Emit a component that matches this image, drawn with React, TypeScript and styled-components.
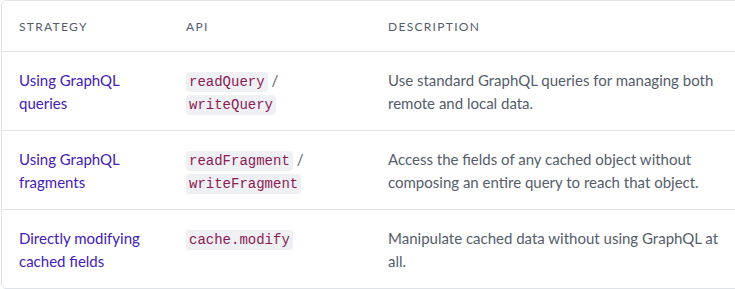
import styled, { createGlobalStyle } from "styled-components";

const GlobalStyle = createGlobalStyle`
    body {
        margin: 0;
        background: #ffffff;
        font-family: "Source Sans Pro", Lato, "Noto Sans", sans-serif;
    }
`;

const Page = styled.div`
    padding-left: 1px;
    overflow: hidden;
    width: 735px;
`;

const Table = styled.table`
    width: 740px;
    border-collapse: separate;
    border-spacing: 0;
    border: 1px solid #dfe2e7;
    border-radius: 5px;
    table-layout: fixed;
`;

const HeadCell = styled.th<{ $w?: number }>`
    box-sizing: border-box;
    width: ${(p) => (p.$w ? `${p.$w}px` : "auto")};
    text-align: left;
    padding: 16px 17px 15px;
    font-size: 12px;
    line-height: 19px;
    font-weight: 400;
    letter-spacing: 1.3px;
    text-transform: uppercase;
    color: #555d6b;
    border-bottom: 1px solid #dfe2e7;
`;

const Cell = styled.td<{ $last?: boolean }>`
    box-sizing: border-box;
    vertical-align: top;
    padding: 17px 17px 15px;
    font-size: 15px;
    line-height: 23px;
    color: #555d6b;
    border-bottom: ${(p) => (p.$last ? "none" : "1px solid #dfe2e7")};
`;

const Strategy = styled.a`
    color: #3f20ba;
    text-decoration: none;
`;

const Code = styled.code`
    font-family: "Liberation Mono", "DejaVu Sans Mono", monospace;
    font-size: 14px;
    line-height: 16px;
    color: #8d1a54;
    background: #eef0f3;
    border-radius: 4px;
    padding: 2px 3px;
`;

interface Row {
    strategy: string;
    apis: string[];
    description: string;
}

const rows: Row[] = [
    {
        strategy: "Using GraphQL queries",
        apis: ["readQuery", "writeQuery"],
        description: "Use standard GraphQL queries for managing both remote and local data.",
    },
    {
        strategy: "Using GraphQL fragments",
        apis: ["readFragment", "writeFragment"],
        description: "Access the fields of any cached object without composing an entire query to reach that object.",
    },
    {
        strategy: "Directly modifying cached fields",
        apis: ["cache.modify"],
        description: "Manipulate cached data without using GraphQL at all.",
    },
];

function App() {
    return (
        <Page>
            <GlobalStyle />
            <Table>
                <thead>
                    <tr>
                        <HeadCell $w={167}>Strategy</HeadCell>
                        <HeadCell $w={202}>API</HeadCell>
                        <HeadCell>Description</HeadCell>
                    </tr>
                </thead>
                <tbody>
                    {rows.map((row, i) => (
                        <tr key={row.strategy}>
                            <Cell $last={i === rows.length - 1}>
                                <Strategy href="#">{row.strategy}</Strategy>
                            </Cell>
                            <Cell $last={i === rows.length - 1}>
                                {row.apis.map((api, j) => (
                                    <span key={api}>
                                        <Code>{api}</Code>
                                        {j < row.apis.length - 1 ? " / " : null}
                                    </span>
                                ))}
                            </Cell>
                            <Cell $last={i === rows.length - 1}>{row.description}</Cell>
                        </tr>
                    ))}
                </tbody>
            </Table>
        </Page>
    );
}

export default App;
